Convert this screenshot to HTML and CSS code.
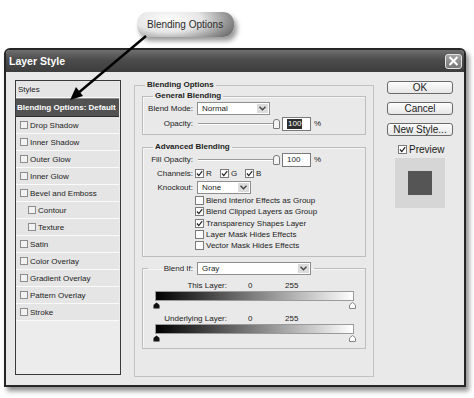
FILE: index.html
```html
<!DOCTYPE html>
<html lang="en">
<head>
  <meta charset="UTF-8" />
  <title>Layer Style</title>
  <link rel="stylesheet" href="styles.css">
</head>
<body>
  <div class="callout">Blending Options</div>
  <svg class="pointer" width="474" height="398" viewBox="0 0 474 398">
    <line x1="146" y1="36" x2="77" y2="94" stroke="#000" stroke-width="2.4"/>
    <polygon points="70,100 83,96 76,87" fill="#000"/>
  </svg>

  <div class="dialog">
    <div class="titlebar">
      <span class="title">Layer Style</span>
      <span class="close">
        <svg width="11" height="10" viewBox="0 0 11 10"><path d="M1.5 1 L9.5 9 M9.5 1 L1.5 9" stroke="#fff" stroke-width="2"/></svg>
      </span>
    </div>

    <div class="content">
      <ul class="styles">
        <li class="head">Styles</li>
        <li class="active">Blending Options: Default</li>
        <li><span class="cb"></span>Drop Shadow</li>
        <li><span class="cb"></span>Inner Shadow</li>
        <li><span class="cb"></span>Outer Glow</li>
        <li><span class="cb"></span>Inner Glow</li>
        <li><span class="cb"></span>Bevel and Emboss</li>
        <li class="sub"><span class="cb"></span>Contour</li>
        <li class="sub"><span class="cb"></span>Texture</li>
        <li><span class="cb"></span>Satin</li>
        <li><span class="cb"></span>Color Overlay</li>
        <li><span class="cb"></span>Gradient Overlay</li>
        <li><span class="cb"></span>Pattern Overlay</li>
        <li><span class="cb"></span>Stroke</li>
      </ul>

      <fieldset class="main">
        <legend>Blending Options</legend>

        <fieldset class="group general">
          <legend>General Blending</legend>
          <div class="row">
            <label>Blend Mode:</label>
            <div class="select mode">Normal<span class="drop"><svg width="7" height="5" viewBox="0 0 7 5"><path d="M0.5 0.8 L3.5 3.8 L6.5 0.8" fill="none" stroke="#444" stroke-width="1.4"/></svg></span></div>
          </div>
          <div class="row">
            <label>Opacity:</label>
            <div class="slider"><span class="thumb"></span></div>
            <div class="num"><span class="sel">100</span></div>
            <span class="pct">%</span>
          </div>
        </fieldset>

        <fieldset class="group advanced">
          <legend>Advanced Blending</legend>
          <div class="row">
            <label>Fill Opacity:</label>
            <div class="slider"><span class="thumb"></span></div>
            <div class="num">100</div>
            <span class="pct">%</span>
          </div>
          <div class="row channels">
            <label>Channels:</label>
            <span class="chan"><span class="cb on"><svg width="7" height="7" viewBox="0 0 7 7"><path d="M1 3.5 L2.8 5.6 L6.2 1.2" fill="none" stroke="#222" stroke-width="1.2"/></svg></span>R</span>
            <span class="chan"><span class="cb on"><svg width="7" height="7" viewBox="0 0 7 7"><path d="M1 3.5 L2.8 5.6 L6.2 1.2" fill="none" stroke="#222" stroke-width="1.2"/></svg></span>G</span>
            <span class="chan"><span class="cb on"><svg width="7" height="7" viewBox="0 0 7 7"><path d="M1 3.5 L2.8 5.6 L6.2 1.2" fill="none" stroke="#222" stroke-width="1.2"/></svg></span>B</span>
          </div>
          <div class="row knock">
            <label>Knockout:</label>
            <div class="select none">None<span class="drop"><svg width="7" height="5" viewBox="0 0 7 5"><path d="M0.5 0.8 L3.5 3.8 L6.5 0.8" fill="none" stroke="#444" stroke-width="1.4"/></svg></span></div>
          </div>
          <ul class="checks">
            <li><span class="cb"></span>Blend Interior Effects as Group</li>
            <li><span class="cb on"><svg width="7" height="7" viewBox="0 0 7 7"><path d="M1 3.5 L2.8 5.6 L6.2 1.2" fill="none" stroke="#222" stroke-width="1.2"/></svg></span>Blend Clipped Layers as Group</li>
            <li><span class="cb on"><svg width="7" height="7" viewBox="0 0 7 7"><path d="M1 3.5 L2.8 5.6 L6.2 1.2" fill="none" stroke="#222" stroke-width="1.2"/></svg></span>Transparency Shapes Layer</li>
            <li><span class="cb"></span>Layer Mask Hides Effects</li>
            <li><span class="cb"></span>Vector Mask Hides Effects</li>
          </ul>
        </fieldset>

        <fieldset class="group blendif">
          <legend>
            <label>Blend If:</label>
            <div class="select gray">Gray<span class="drop"><svg width="7" height="5" viewBox="0 0 7 5"><path d="M0.5 0.8 L3.5 3.8 L6.5 0.8" fill="none" stroke="#444" stroke-width="1.4"/></svg></span></div>
          </legend>
          <div class="range-label first">
            <span class="rl">This Layer:</span><span class="lo">0</span><span>255</span>
          </div>
          <div class="ramp"></div>
          <div class="stops">
            <svg width="7" height="7" viewBox="0 0 7 7"><path d="M0.5 6.5 V3 L3.5 0.5 L6.5 3 V6.5 Z" fill="#111"/></svg>
            <svg width="7" height="7" viewBox="0 0 7 7"><path d="M0.5 6.5 V3 L3.5 0.5 L6.5 3 V6.5 Z" fill="#fff" stroke="#888"/></svg>
          </div>
          <div class="range-label">
            <span class="rl">Underlying Layer:</span><span class="lo">0</span><span>255</span>
          </div>
          <div class="ramp"></div>
          <div class="stops">
            <svg width="7" height="7" viewBox="0 0 7 7"><path d="M0.5 6.5 V3 L3.5 0.5 L6.5 3 V6.5 Z" fill="#111"/></svg>
            <svg width="7" height="7" viewBox="0 0 7 7"><path d="M0.5 6.5 V3 L3.5 0.5 L6.5 3 V6.5 Z" fill="#fff" stroke="#888"/></svg>
          </div>
        </fieldset>
      </fieldset>

      <div class="actions">
        <button class="btn ok">OK</button>
        <button class="btn">Cancel</button>
        <button class="btn">New Style...</button>
        <div class="preview-row">
          <span class="cb on"><svg width="7" height="7" viewBox="0 0 7 7"><path d="M1 3.5 L2.8 5.6 L6.2 1.2" fill="none" stroke="#222" stroke-width="1.2"/></svg></span>Preview
        </div>
        <div class="swatch"><span></span></div>
      </div>
    </div>
  </div>
</body>
</html>
```

FILE: styles.css
```css
* {
  box-sizing: border-box;
}

body {
  margin: 0;
  width: 474px;
  height: 398px;
  overflow: hidden;
  position: relative;
  background-color: #fff;
  font-family: "Liberation Sans", Arial, sans-serif;
  font-size: 8px;
  color: #1c1c1c;
}

/* annotation */
.callout {
  position: absolute;
  left: 137px;
  top: 12px;
  width: 97px;
  height: 25px;
  padding-left: 10px;
  line-height: 25px;
  font-size: 10px;
  color: #2a2a2a;
  border-radius: 11px;
  background: radial-gradient(ellipse 85% 130% at 32% 28%, #fdfdfd 0%, #e6e6e6 40%, #909090 74%, #555 100%);
  box-shadow: 3px 4px 5px rgba(0, 0, 0, 0.4);
  z-index: 2;
}

.pointer {
  position: absolute;
  left: 0;
  top: 0;
  z-index: 3;
  pointer-events: none;
}

/* dialog */
.dialog {
  margin: 48px 0 0 4px;
  width: 462px;
  height: 339px;
  border: 2px solid #262626;
  border-radius: 6px 6px 0 0;
  background-color: #e9e9e9;
  box-shadow: 3px 4px 5px rgba(0, 0, 0, 0.45);
  overflow: hidden;
}

.titlebar {
  height: 22px;
  display: flex;
  align-items: center;
  justify-content: space-between;
  padding: 0 2px 0 3px;
  background: linear-gradient(#6e6e6e, #4c4c4c 45%, #3d3d3d);
}

.title {
  color: #fff;
  font-weight: bold;
  font-size: 10.5px;
}

.close {
  width: 17px;
  height: 15px;
  display: flex;
  align-items: center;
  justify-content: center;
  border: 1px solid #e4e4e4;
  border-radius: 3px;
  background: linear-gradient(#a4a4a4, #777);
}

.content {
  display: flex;
  align-items: flex-start;
  padding: 8px 0 0 9px;
}

/* styles list */
.styles {
  list-style: none;
  margin: 0;
  padding: 0;
  width: 106px;
  height: 295px;
  border: 1px solid #3a3a3a;
  background-color: #ececec;
}

.styles li {
  height: 17px;
  display: flex;
  align-items: center;
  padding-left: 4px;
  margin-right: 1px;
  background-color: #e5e5e5;
  border-bottom: 1px solid #fafafa;
}

.styles li.head {
  padding-left: 2px;
}

.styles li.active {
  height: 19px;
  padding-left: 1px;
  background-color: #525252;
  border-top: 1px solid #8a8a8a;
  border-bottom: 1px solid #2e2e2e;
  color: #fff;
  font-weight: bold;
}

.styles li.sub {
  padding-left: 12px;
}

.cb {
  width: 8px;
  height: 8px;
  flex: none;
  margin-right: 2px;
  display: inline-flex;
  align-items: center;
  justify-content: center;
  border: 1px solid #8c8c8c;
  background-color: #f2f2f2;
}

.cb.on,
.checks .cb,
.channels .cb {
  width: 9px;
  height: 9px;
  background-color: #fff;
  border-color: #7a7a7a;
}

/* main group */
fieldset {
  margin: 0;
  min-width: 0;
}

legend {
  font-weight: bold;
  line-height: 10px;
  padding: 0 2px;
}

.main {
  width: 240px;
  height: 297px;
  margin-left: 13px;
  padding: 0 7px;
  border: 1px solid #c2c2c2;
}

.main > legend {
  margin-left: 3px;
}

.group {
  width: 224px;
  padding: 0;
  border: 1px solid #bcbcbc;
  box-shadow: inset 1px 1px 0 #f6f6f6;
}

.group > legend {
  margin-left: 10px;
}

.general {
  height: 44px;
  margin-top: 1px;
}

.advanced {
  height: 115px;
  margin-top: 7px;
}

.blendif {
  height: 87px;
  margin-top: 5px;
}

.row {
  height: 15px;
  display: flex;
  align-items: center;
}

.row label,
.blendif legend label {
  width: 50px;
  margin-right: 4px;
  text-align: right;
}

.select {
  height: 13px;
  display: flex;
  align-items: center;
  justify-content: space-between;
  padding: 0 1px 0 4px;
  border: 1px solid #8e8e8e;
  background-color: #fff;
}

.select.mode {
  width: 73px;
}

.select.none {
  width: 54px;
}

.select.gray {
  width: 114px;
}

.drop {
  width: 11px;
  height: 9px;
  display: flex;
  align-items: center;
  justify-content: center;
  background-color: #dcdcdc;
}

.slider {
  width: 83px;
  height: 12px;
  position: relative;
  margin-left: 1px;
  background: linear-gradient(transparent 5px, #9a9a9a 5px, #9a9a9a 6px, #fff 6px, #fff 7px, transparent 7px);
  background-size: 78px 12px;
  background-repeat: no-repeat;
}

.thumb {
  position: absolute;
  right: 1px;
  top: 1px;
  width: 7px;
  height: 10px;
  border: 1px solid #7a7a7a;
  border-radius: 3px 3px 1px 1px;
  background-color: #f4f4f4;
}

.num {
  width: 29px;
  height: 14px;
  margin-left: 1px;
  padding-left: 4px;
  display: flex;
  align-items: center;
  border: 1px solid #7a7a7a;
  background-color: #fff;
}

.num .sel {
  background-color: #2e2e2e;
  color: #fff;
  padding: 0 1px;
  line-height: 10px;
}

.pct {
  margin-left: 3px;
}

.channels {
  height: 13px;
}

.channels label {
  margin-right: 2px;
}

.chan {
  width: 25px;
  display: flex;
  align-items: center;
}

.knock {
  height: 14px;
}

.checks {
  list-style: none;
  margin: 1px 0 0;
  padding: 0 0 0 52px;
}

.checks li {
  height: 11.3px;
  display: flex;
  align-items: center;
}

/* blend if */
.blendif > legend {
  display: flex;
  align-items: center;
  margin-left: 5px;
  padding: 0 3px;
  font-weight: normal;
  line-height: 11px;
}

.blendif legend label {
  width: 42px;
}

.range-label {
  height: 12px;
  margin-top: 3px;
  display: flex;
  align-items: center;
}

.range-label.first {
  margin-top: 4px;
}

.range-label .rl {
  width: 84px;
  text-align: right;
}

.range-label .lo {
  width: 37px;
  margin-left: 21px;
}

.ramp {
  width: 199px;
  height: 10px;
  margin-left: 12px;
  border: 1px solid #9a9a9a;
  background: linear-gradient(to right, #000, #fff);
}

.stops {
  width: 203px;
  height: 7px;
  margin: 1px 0 0 10px;
  display: flex;
  justify-content: space-between;
}

/* buttons column */
.actions {
  width: 66px;
  margin-left: 13px;
  padding-top: 1px;
  display: flex;
  flex-direction: column;
  align-items: flex-start;
}

.btn {
  width: 66px;
  height: 13px;
  margin: 0 0 8px;
  padding: 0;
  font-family: "Liberation Sans", Arial, sans-serif;
  font-size: 10px;
  line-height: 11px;
  color: #222;
  border: 1px solid #6a6a6a;
  border-radius: 3px;
  background: linear-gradient(#fdfdfd, #e6e6e6);
}

.preview-row {
  height: 12px;
  margin: -1px 0 0 11px;
  display: flex;
  align-items: center;
  font-size: 10px;
}

.preview-row .cb {
  margin-right: 2px;
}

.swatch {
  width: 50px;
  height: 50px;
  margin: 3px 0 0 8px;
  display: flex;
  align-items: center;
  justify-content: center;
  background-color: #d6d6d6;
}

.swatch span {
  width: 24px;
  height: 24px;
  background-color: #555;
}
```
